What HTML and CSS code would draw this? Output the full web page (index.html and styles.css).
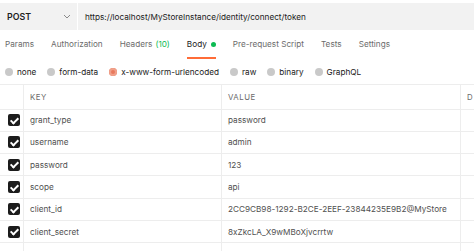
FILE: index.html
```html
<!DOCTYPE html>
<html lang="en">

<head>
    <meta charset="UTF-8">
    <title>Request</title>
    <link rel="stylesheet" href="styles.css">
</head>

<body>
    <div class="urlbar">
        <div class="method">
            <span>POST</span>
            <svg class="chevron" width="8" height="5" viewBox="0 0 8 5"><path d="M1 1l3 3 3-3" fill="none" stroke="#8a8a8a" stroke-width="1"/></svg>
        </div>
        <div class="url">https://localhost/MyStoreInstance/identity/connect/token</div>
    </div>

    <div class="tabs">
        <div class="tab">Params</div>
        <div class="tab">Authorization</div>
        <div class="tab">Headers <span class="count">(10)</span></div>
        <div class="tab active">Body <span class="dot"></span></div>
        <div class="tab">Pre-request Script</div>
        <div class="tab">Tests</div>
        <div class="tab">Settings</div>
    </div>

    <div class="radios">
        <div class="radio"><span class="circle"></span>none</div>
        <div class="radio"><span class="circle"></span>form-data</div>
        <div class="radio"><span class="circle on"></span>x-www-form-urlencoded</div>
        <div class="radio"><span class="circle"></span>raw</div>
        <div class="radio"><span class="circle"></span>binary</div>
        <div class="radio"><span class="circle"></span>GraphQL</div>
    </div>

    <div class="table">
        <div class="row head">
            <div class="cell check"></div>
            <div class="cell key">KEY</div>
            <div class="cell value">VALUE</div>
            <div class="cell desc">D</div>
        </div>
        <div class="row">
            <div class="cell check"><span class="box"></span></div>
            <div class="cell key">grant_type</div>
            <div class="cell value">password</div>
            <div class="cell desc"></div>
        </div>
        <div class="row">
            <div class="cell check"><span class="box"></span></div>
            <div class="cell key">username</div>
            <div class="cell value">admin</div>
            <div class="cell desc"></div>
        </div>
        <div class="row">
            <div class="cell check"><span class="box"></span></div>
            <div class="cell key">password</div>
            <div class="cell value">123</div>
            <div class="cell desc"></div>
        </div>
        <div class="row">
            <div class="cell check"><span class="box"></span></div>
            <div class="cell key">scope</div>
            <div class="cell value">api</div>
            <div class="cell desc"></div>
        </div>
        <div class="row">
            <div class="cell check"><span class="box"></span></div>
            <div class="cell key">client_id</div>
            <div class="cell value">2CC9CB98-1292-B2CE-2EEF-23844235E9B2@MyStore</div>
            <div class="cell desc"></div>
        </div>
        <div class="row">
            <div class="cell check"><span class="box"></span></div>
            <div class="cell key">client_secret</div>
            <div class="cell value">8xZkcLA_X9wMBoXjvcrrtw</div>
            <div class="cell desc"></div>
        </div>
        <div class="row empty">
            <div class="cell check"></div>
            <div class="cell key">Key</div>
            <div class="cell value">Value</div>
            <div class="cell desc">D</div>
        </div>
    </div>
</body>

</html>
```

FILE: styles.css
```css
body {
    margin: 0;
    width: 474px;
    height: 251px;
    overflow: hidden;
    background: #ffffff;
    font-family: Inter, "Noto Sans", sans-serif;
    font-size: 8.2px;
    color: #212121;
}

.urlbar {
    display: flex;
    margin-top: 3px;
    height: 27px;
}

.method {
    width: 70px;
    padding-left: 7px;
    display: flex;
    align-items: center;
    justify-content: space-between;
    background: #f2f2f2;
    font-weight: 600;
    font-size: 8.8px;
    color: #212121;
}

.chevron {
    margin-right: 6px;
}

.url {
    flex: 1;
    margin-left: 1px;
    padding-left: 7px;
    display: flex;
    align-items: center;
    background: #f2f2f2;
    font-size: 8.2px;
    color: #212121;
}

.tabs {
    display: flex;
    gap: 17px;
    padding-left: 5px;
    height: 28px;
    margin-top: 1px;
}

.tab {
    display: flex;
    align-items: center;
    color: #6b6b6b;
    font-size: 8.2px;
    border-bottom: 2px solid transparent;
    box-sizing: border-box;
}

.tab .count {
    color: #0cbb52;
    margin-left: 3px;
}

.tab.active {
    color: #212121;
    border-bottom-color: #ff6c37;
}

.dot {
    display: inline-block;
    width: 5px;
    height: 5px;
    border-radius: 50%;
    background: #0cbb52;
    margin-left: 4px;
}

.radios {
    display: flex;
    gap: 11px;
    padding-left: 5px;
    height: 25px;
    align-items: center;
}

.radio {
    display: flex;
    align-items: center;
    font-size: 8.2px;
    color: #212121;
}

.circle {
    width: 8px;
    height: 8px;
    border-radius: 50%;
    background: #c9c9c9;
    margin-right: 4px;
}

.circle.on {
    background: #e8795d;
    box-shadow: inset 0 0 0 2px #f0a08a;
}

.table {
    border-top: 1px solid #ededed;
}

.row {
    display: flex;
    height: 22.3px;
    border-bottom: 1px solid #ededed;
    box-sizing: border-box;
}

.row.head {
    height: 24.5px;
}

.cell {
    display: flex;
    align-items: center;
    font-size: 8.2px;
    color: #505050;
    border-right: 1px solid #ededed;
    box-sizing: border-box;
    white-space: nowrap;
    overflow: hidden;
}

.check {
    width: 24px;
    justify-content: center;
    padding-left: 5px;
}

.key {
    width: 198px;
    padding-left: 6px;
}

.value {
    width: 239px;
    padding-left: 6px;
}

.desc {
    flex: 1;
    padding-left: 6px;
    border-right: none;
}

.head .cell {
    color: #6b6b6b;
    font-size: 7.8px;
    letter-spacing: 0.5px;
}

.empty .cell {
    color: #b3b3b3;
}

.box {
    width: 12px;
    height: 12px;
    border-radius: 2px;
    background: #1c1c1c;
    position: relative;
}

.box::after {
    content: "";
    position: absolute;
    left: 4px;
    top: 1.5px;
    width: 3px;
    height: 6px;
    border: solid #ffffff;
    border-width: 0 2px 2px 0;
    transform: rotate(45deg);
}
```
